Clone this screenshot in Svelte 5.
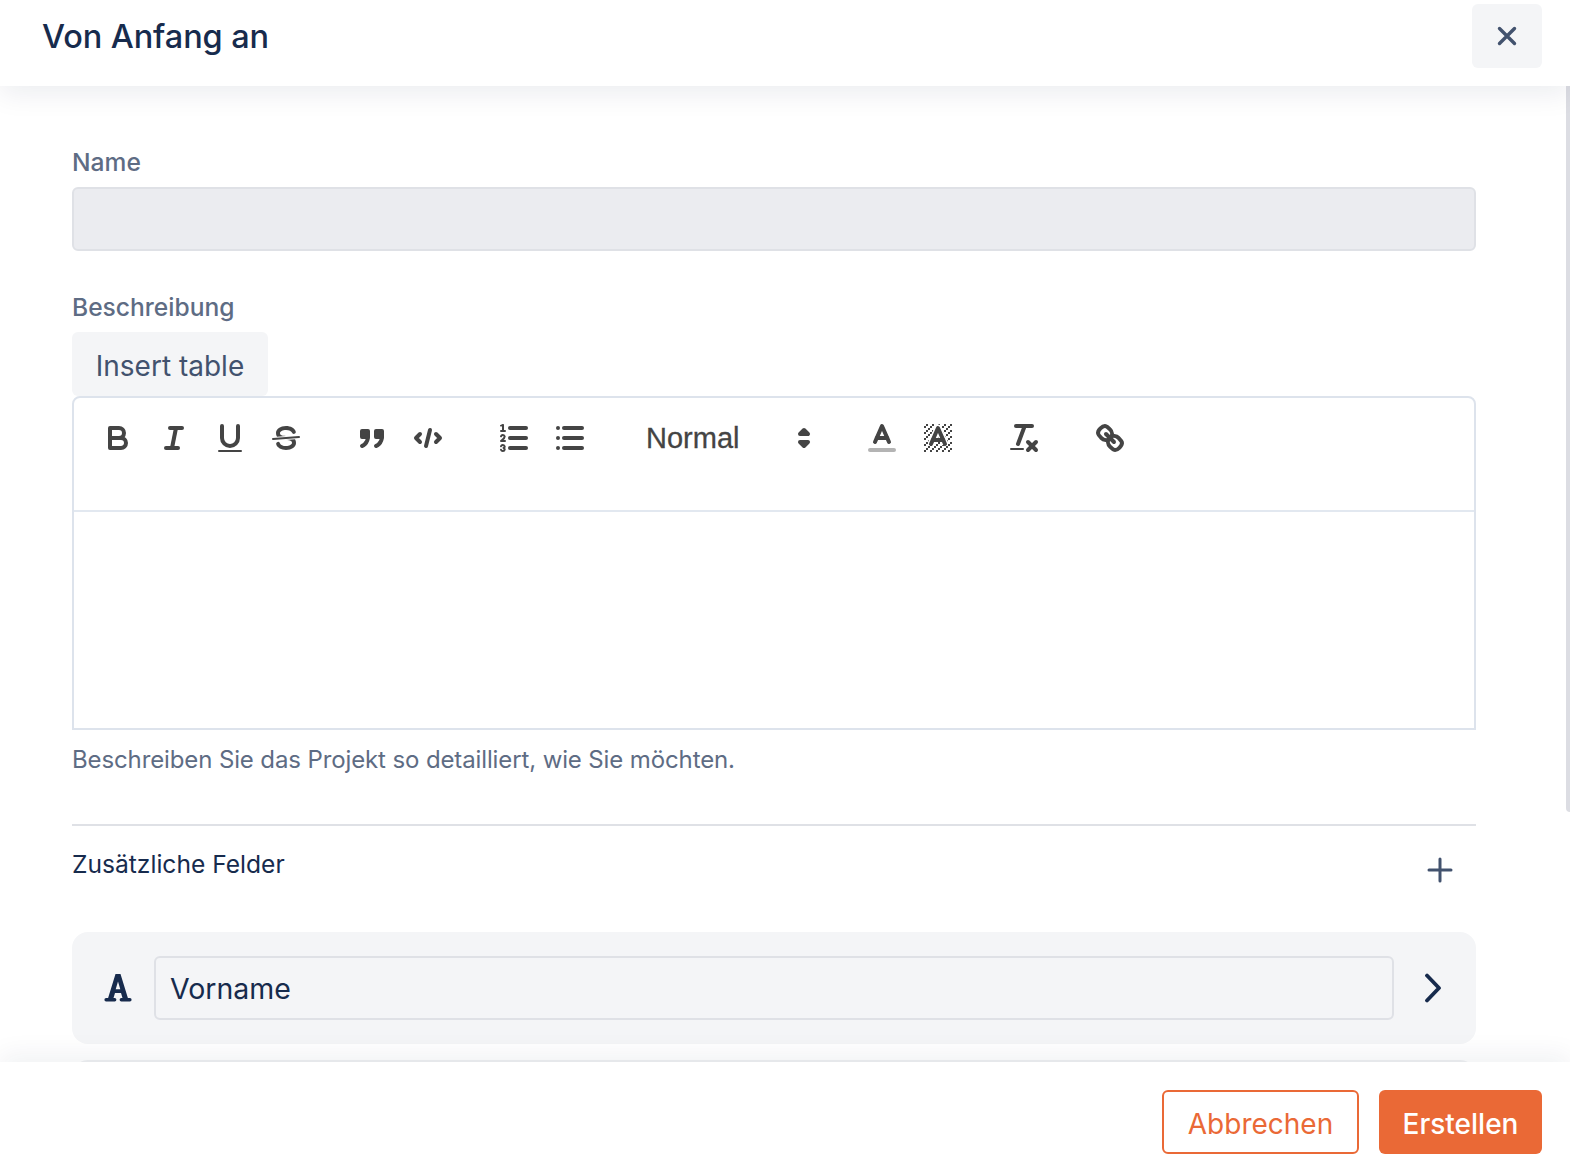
<script>
  const label = 'Beschreibung';
</script>

<div class="modal">
  <header class="head">
    <h1>Von Anfang an</h1>
    <button class="close" aria-label="Schließen">
      <svg viewBox="0 0 24 24" width="24" height="24"><path d="M4.5 4.5l15 15M19.5 4.5l-15 15" /></svg>
    </button>
  </header>

  <main class="body">
    <div class="bar"></div>
    <div class="field name">
      <div class="label">Name</div>
      <div class="input"></div>
    </div>

    <div class="label desc">{label}</div>
    <button class="insert">Insert table</button>

    <div class="editor">
      <div class="toolbar">
        <span class="group">
          <span class="tb"><svg viewBox="0 0 18 18"><path class="s" d="M5,4H9.5A2.5,2.5,0,0,1,12,6.5v0A2.5,2.5,0,0,1,9.5,9H5A0,0,0,0,1,5,9V4A0,0,0,0,1,5,4Z"/><path class="s" d="M5,9h5.5A2.5,2.5,0,0,1,13,11.5v0A2.5,2.5,0,0,1,10.5,14H5a0,0,0,0,1,0,0V9A0,0,0,0,1,5,9Z"/></svg></span>
          <span class="tb"><svg viewBox="0 0 18 18"><line class="s" x1="7" x2="13" y1="4" y2="4"/><line class="s" x1="5" x2="11" y1="14" y2="14"/><line class="s" x1="8" x2="10" y1="14" y2="4"/></svg></span>
          <span class="tb"><svg viewBox="0 0 18 18"><path class="s" d="M5,3V9a4.012,4.012,0,0,0,4,4H9a4.012,4.012,0,0,0,4-4V3"/><rect class="f" height="1" rx=".5" ry=".5" width="12" x="3" y="15"/></svg></span>
          <span class="tb"><svg viewBox="0 0 18 18"><line class="s thin" x1="15.5" x2="2.5" y1="8.5" y2="9.5"/><path class="f" d="M9.007,8C6.542,7.791,6,7.519,6,6.5,6,5.792,7.283,5,9,5c1.571,0,2.765.679,2.969,1.309a1,1,0,0,0,1.9-.617C13.356,4.106,11.354,3,9,3,6.2,3,4,4.538,4,6.5a3.2,3.2,0,0,0,.5,1.843Z"/><path class="f" d="M8.984,10C11.457,10.208,12,10.479,12,11.5c0,.708-1.283,1.5-3,1.5-1.571,0-2.765-.679-2.969-1.309a1,1,0,1,0-1.9.617C4.644,13.894,6.646,15,9,15c2.8,0,5-1.538,5-3.5a3.2,3.2,0,0,0-.5-1.843Z"/></svg></span>
        </span>
        <span class="group">
          <span class="tb"><svg viewBox="0 0 18 18"><rect class="f s" height="3" width="3" x="4" y="5.5"/><rect class="f s" height="3" width="3" x="11" y="5.5"/><path class="s" d="M7,8c0,4.031-3,5-3,5"/><path class="s" d="M14,8c0,4.031-3,5-3,5"/></svg></span>
          <span class="tb"><svg viewBox="0 0 18 18"><polyline class="s" points="5 7 3 9 5 11"/><polyline class="s" points="13 7 15 9 13 11"/><line class="s" x1="10" x2="8" y1="5" y2="13"/></svg></span>
        </span>
        <span class="group">
          <span class="tb"><svg viewBox="0 0 18 18"><line class="s" x1="7" x2="15" y1="4" y2="4"/><line class="s" x1="7" x2="15" y1="9" y2="9"/><line class="s" x1="7" x2="15" y1="14" y2="14"/><line class="s thin" x1="2.5" x2="4.5" y1="5.5" y2="5.5"/><path class="f" d="M3.5,6A0.5,0.5,0,0,1,3,5.5V3.085l-0.276.138A0.5,0.5,0,0,1,2.053,3c-0.124-.247-0.023-0.324.224-0.447l1-.5A0.5,0.5,0,0,1,4,2.5v3A0.5,0.5,0,0,1,3.5,6Z"/><path class="s thin" d="M4.5,10.5h-2c0-.234,1.85-1.076,1.85-2.234A0.959,0.959,0,0,0,2.5,8.156"/><path class="s thin" d="M2.5,14.846a0.959,0.959,0,0,0,1.85-.109A0.7,0.7,0,0,0,3.75,14a0.688,0.688,0,0,0,.6-0.736,0.959,0.959,0,0,0-1.85-.109"/></svg></span>
          <span class="tb"><svg viewBox="0 0 18 18"><line class="s" x1="6" x2="15" y1="4" y2="4"/><line class="s" x1="6" x2="15" y1="9" y2="9"/><line class="s" x1="6" x2="15" y1="14" y2="14"/><line class="s" x1="3" x2="3" y1="4" y2="4"/><line class="s" x1="3" x2="3" y1="9" y2="9"/><line class="s" x1="3" x2="3" y1="14" y2="14"/></svg></span>
        </span>
        <span class="group">
          <span class="picker">
            <span class="pick-label">Normal</span>
            <svg viewBox="0 0 18 18"><polygon class="s f" points="7 11 9 13 11 11 7 11"/><polygon class="s f" points="7 7 9 5 11 7 7 7"/></svg>
          </span>
        </span>
        <span class="group">
          <span class="tb"><svg viewBox="0 0 18 18"><line class="s grey" x1="3" x2="15" y1="15" y2="15"/><polyline class="s" points="5.5 11 9 3 12.5 11"/><line class="s" x1="11.63" x2="6.38" y1="9" y2="9"/></svg></span>
          <span class="tb"><svg viewBox="0 0 18 18"><defs><pattern id="dither" width="3" height="3" patternUnits="userSpaceOnUse"><rect x="0" y="2" width="1" height="1" fill="#444"/><rect x="1" y="1" width="1" height="1" fill="#444"/><rect x="2" y="0" width="1" height="1" fill="#444"/></pattern></defs><rect x="2" y="2" width="14" height="14" fill="url(#dither)" shape-rendering="crispEdges" /><polyline class="halo" points="5.5 12 9 4 12.5 12"/><polyline class="s" points="5.5 12 9 4 12.5 12"/><line class="s" x1="11.63" x2="6.38" y1="10" y2="10"/></svg></span>
        </span>
        <span class="group">
          <span class="tb"><svg viewBox="0 0 18 18"><line class="s" x1="5" x2="13" y1="3" y2="3"/><line class="s" x1="6" x2="9.35" y1="12" y2="3"/><line class="s" x1="11" x2="15" y1="11" y2="15"/><line class="s" x1="15" x2="11" y1="11" y2="15"/><rect class="f" height="1" rx="0.5" ry="0.5" width="7" x="2" y="14"/></svg></span>
        </span>
        <span class="group">
          <span class="tb"><svg viewBox="0 0 18 18"><line class="s" x1="7" x2="11" y1="7" y2="11"/><path class="s" d="M8.9,4.577a3.476,3.476,0,0,1,.36,4.679A3.476,3.476,0,0,1,4.577,8.9C3.185,7.5,2.035,6.4,4.217,4.217S7.5,3.185,8.9,4.577Z"/><path class="s" d="M13.423,9.1a3.476,3.476,0,0,0-4.679-.36,3.476,3.476,0,0,0,.36,4.679c1.392,1.392,2.5,2.542,4.679.36S14.815,10.5,13.423,9.1Z"/></svg></span>
        </span>
      </div>
      <div class="content"></div>
    </div>

    <p class="hint">Beschreiben Sie das Projekt so detailliert, wie Sie möchten.</p>

    <div class="extra">
      <span>Zusätzliche Felder</span>
      <svg class="plus" viewBox="0 0 26 26" width="26" height="26"><path d="M13 2v22M2 13h22"/></svg>
    </div>

    <div class="card">
      <svg class="aicon" viewBox="0 0 28 30" width="28" height="30"><path d="M11.500 1h5l7.400 24h2a1.700 1.700 0 0 1 0 3.400h-8.600a1.700 1.700 0 0 1 0-3.400h1.200l-1.500-5h-6l-1.500 5h1.200a1.700 1.700 0 0 1 0 3.400H2.100a1.700 1.700 0 0 1 0-3.400h2zM14 8.500l-2.300 7.800h4.600z" fill-rule="evenodd"/></svg>
      <div class="field-name">Vorname</div>
      <svg class="chev" viewBox="0 0 18 30" width="18" height="30"><path d="M3 2.500l12 12.500L3 27.500"/></svg>
    </div>
    <div class="card next"></div>
  </main>

  <footer class="foot">
    <button class="btn ghost">Abbrechen</button>
    <button class="btn solid">Erstellen</button>
  </footer>
</div>

<style>
  :global(body) { margin: 0; background: #fff; }
  .modal {
    height: 1170px; display: flex; flex-direction: column; overflow: hidden;
    font-family: Inter, "Noto Sans", sans-serif; color: #172b4d; position: relative;
  }
  .head {
    height: 86px; flex: none; box-sizing: border-box; display: flex; justify-content: space-between; align-items: flex-start;
    padding: 4px 28px 0 42px; background: #fff; position: relative; z-index: 2;
    box-shadow: 0 8px 28px rgba(9, 30, 66, .08);
  }
  h1 { margin: 15px 0 0; font-size: 32.500px; line-height: 36px; font-weight: 500; color: #172b4d; letter-spacing: -.1px; }
  .close { width: 70px; height: 64px; background: #f4f5f7; border: 0; border-radius: 6px; display: flex; align-items: center; justify-content: center; padding: 0; }
  .close path { stroke: #42526e; stroke-width: 3.400; stroke-linecap: round; fill: none; }
  .body { flex: 1; min-height: 0; overflow: hidden; padding: 0 94px 0 72px; position: relative; }
  .bar { position: absolute; top: 0; right: 0; width: 4px; height: 726px; background: #dcdde3; border-radius: 0 0 0 4px; }
  .label { font-size: 24.600px; line-height: 30px; font-weight: 500; color: #5e6c84; }
  .name { padding-top: 61px; }
  .input { height: 64px; box-sizing: border-box; margin-top: 10px; background: #ebecf0; border: 2px solid #dfe1e6; border-radius: 6px; }
  .desc { margin-top: 41px; }
  .insert {
    display: block; width: 196px; height: 64px; margin: 10px 0 0; border: 0; border-radius: 6px; background: #f4f5f7;
    font: 400 28px Inter, sans-serif; color: #42526e; padding: 3px 0 0;
  }
  .editor { margin-top: 0; border: 2px solid #dde3ec; border-radius: 8px 8px 0 0; }
  .toolbar { display: flex; padding: 16px 14px 46px 16px; height: 50px; border-bottom: 2px solid #e2e8f0; }
  .group { display: flex; margin-right: 30px; }
  .tb { width: 56px; height: 48px; display: flex; align-items: center; justify-content: center; }
  .tb svg, .picker svg { width: 36px; height: 36px; display: block; }
  .s { fill: none; stroke: #444; stroke-width: 2; stroke-linecap: round; stroke-linejoin: round; }
  .f { fill: #444; }
  .s.f { fill: #444; stroke: #444; }
  .thin { stroke-width: 1; }
  .grey { stroke: #b4b4b4; }
  .halo { fill: none; stroke: #fff; stroke-width: 3.500; stroke-linejoin: round; }
  .picker { width: 196px; height: 48px; display: flex; align-items: center; justify-content: space-between; box-sizing: border-box; padding-left: 18px; padding-right: 2px; }
  .pick-label { font: 400 29px "Liberation Sans", Arial, sans-serif; color: #444; -webkit-text-stroke: .3px #444; }
  .content { height: 216px; }
  .hint { margin: 15px 0 0; font-size: 24px; line-height: 30px; color: #5e6c84; letter-spacing: -.12px; }
  .extra { margin-top: 49px; border-top: 2px solid #dfe1e6; height: 108px; box-sizing: border-box; position: relative; font-size: 24.600px; font-weight: 400; color: #172b4d; padding-top: 23px; line-height: 30px; }
  .plus { position: absolute; right: 23px; top: 31px; }
  .plus path { stroke: #42526e; stroke-width: 3; fill: none; stroke-linecap: round; }
  .card { height: 112px; box-sizing: border-box; background: #f4f5f7; border-radius: 16px; display: flex; align-items: center; padding: 0 34px 0 32px; }
  .card.next { margin-top: 16px; background: #f0f1f3; }
  .aicon { flex: none; margin-right: 22px; }
  .aicon path { fill: #172b4d; }
  .field-name { flex: 1; height: 64px; box-sizing: border-box; border: 2px solid #dfe1e6; border-radius: 6px; font-size: 28.500px; line-height: 62px; padding-left: 14px; color: #172b4d; margin-right: 30px; }
  .chev { flex: none; }
  .chev path { fill: none; stroke: #172b4d; stroke-width: 3.800; stroke-linecap: round; stroke-linejoin: round; }
  .foot { height: 108px; flex: none; box-sizing: border-box; background: #fff; position: relative; z-index: 2; display: flex; justify-content: flex-end; align-items: flex-start; gap: 20px; padding: 28px 28px 0; box-shadow: 0 -8px 24px rgba(9, 30, 66, .06); }
  .btn { height: 64px; border-radius: 6px; font: 500 28px Inter, sans-serif; padding: 3px 0 0; }
  .ghost { width: 197px; background: #fff; border: 2px solid #ea6936; color: #ea6936; font-weight: 400; }
  .solid { width: 163px; background: #ea6936; border: 0; color: #fff; }
</style>
